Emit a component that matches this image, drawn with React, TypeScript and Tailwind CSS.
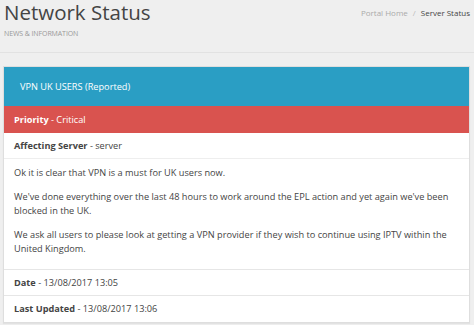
import React from "react";

export default function App() {
  return (
    <div
      className="w-[474px] h-[325px] overflow-hidden bg-[#efefef] text-[#333]"
      style={{ fontFamily: '"Open Sans", sans-serif' }}
    >
      <div className="flex items-start justify-between pl-[4px] pr-[4px] h-[53px] border-b border-[#e2e2e2]">
        <div>
          <div className="text-[20.5px] leading-[25px] text-[#444]">Network Status</div>
          <div className="text-[7px] leading-[10px] text-[#999] mt-[4px] tracking-[-0.1px]">NEWS &amp; INFORMATION</div>
        </div>
        <div className="text-[8px] leading-[12px] mt-[7px] flex gap-[5px]">
          <span className="text-[#aaa]">Portal Home</span>
          <span className="text-[#bbb]">/</span>
          <span className="text-[#444]">Server Status</span>
        </div>
      </div>
      <div className="mt-[13px] ml-[3px] w-[467px] bg-white border border-[#dedede] shadow-[0_1px_1px_rgba(0,0,0,0.05)] text-[9.2px] leading-[14px]">
        <div className="bg-[#2a9ec4] text-white h-[39px] flex items-center px-[13px]">
          <span className="ml-[3px]">VPN UK USERS (Reported)</span>
        </div>
        <div className="bg-[#d9534f] text-white h-[27px] flex items-center px-[10px]">
          <span><b>Priority</b> - Critical</span>
        </div>
        <div className="h-[26px] flex items-center px-[10px] border-b border-[#eee] text-[#444]">
          <span><b>Affecting Server</b> - server</span>
        </div>
        <div className="px-[10px] pt-[7px] pb-[13px] border-b border-[#e6e6e6] text-[#444]">
          <p>Ok it is clear that VPN is a must for UK users now.</p>
          <p className="mt-[10px]">We've done everything over the last 48 hours to work around the EPL action and yet again we've been blocked in the UK.</p>
          <p className="mt-[10px]">We ask all users to please look at getting a VPN provider if they wish to continue using IPTV within the United Kingdom.</p>
        </div>
        <div className="h-[26px] flex items-center px-[10px] border-b border-[#e6e6e6] text-[#444]">
          <span><b>Date</b> - 13/08/2017 13:05</span>
        </div>
        <div className="h-[26px] flex items-center px-[10px] text-[#444]">
          <span><b>Last Updated</b> - 13/08/2017 13:06</span>
        </div>
      </div>
    </div>
  );
}
